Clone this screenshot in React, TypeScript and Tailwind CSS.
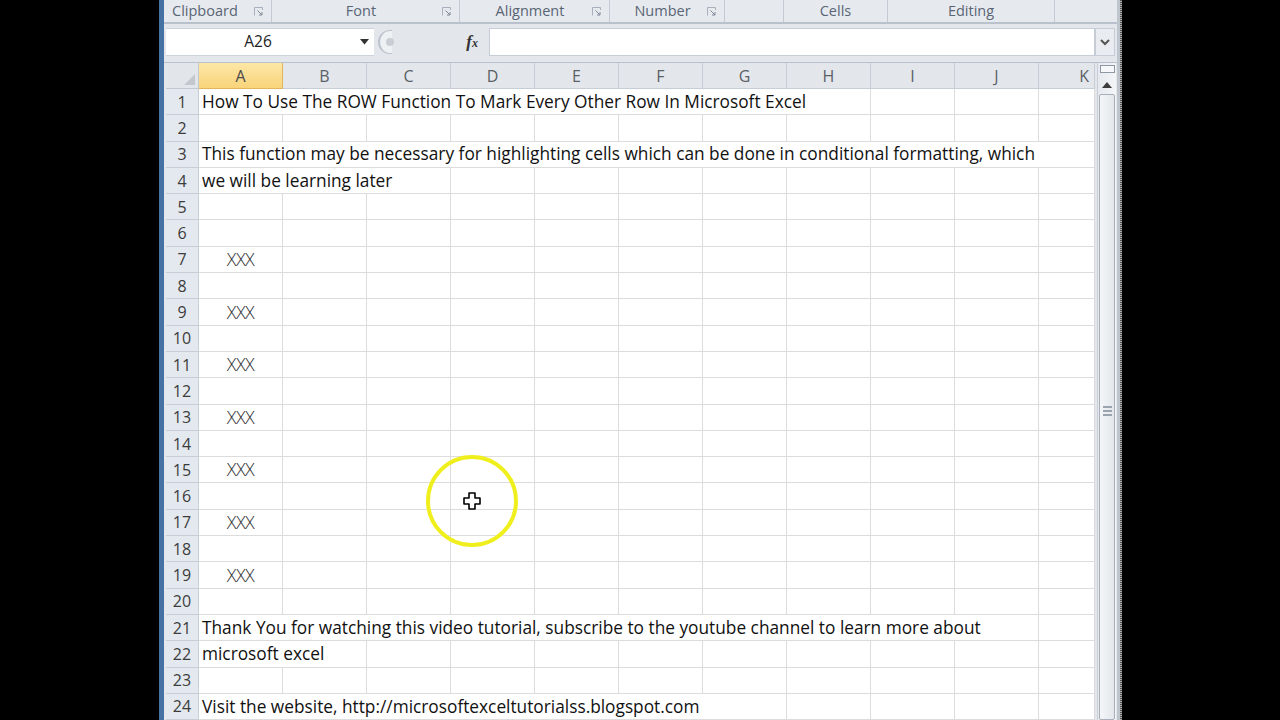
// Excel 2010 sheet — ROW function tutorial frame
import React from 'react';

const COLS = ['A', 'B', 'C', 'D', 'E', 'F', 'G', 'H', 'I', 'J', 'K'];
const COL_W = 84;
const LAST_W = 56;

// row number -> [text, columns covered, centred]
const ROWS: Record<number, [string, number, boolean?]> = {
  1: ['How To Use The ROW Function To Mark Every Other Row In Microsoft Excel', 8],
  3: ['This function may be necessary for highlighting cells which can be done in conditional formatting, which', 11],
  4: ['we will be learning later', 3],
  7: ['XXX', 1, true],
  9: ['XXX', 1, true],
  11: ['XXX', 1, true],
  13: ['XXX', 1, true],
  15: ['XXX', 1, true],
  17: ['XXX', 1, true],
  19: ['XXX', 1, true],
  21: ['Thank You for watching this video tutorial, subscribe to the youtube channel to learn more about', 10],
  22: ['microsoft excel', 2],
  24: ['Visit the website, http://microsoftexceltutorialss.blogspot.com', 7],
};

const GROUPS = [
  { label: 'Clipboard', w: 108, launcher: true, align: 'start' },
  { label: 'Font', w: 188, launcher: true },
  { label: 'Alignment', w: 150, launcher: true },
  { label: 'Number', w: 115, launcher: true },
  { label: '', w: 59 },
  { label: 'Cells', w: 104 },
  { label: 'Editing', w: 167 },
];

function Launcher() {
  return (
    <svg width="9" height="9" viewBox="0 0 9 9" className="shrink-0">
      <path d="M0.5 8.5V0.5H8.5V3" fill="none" stroke="#a7b0bc" />
      <path d="M3.5 3.5L8 8M8 5V8H5" fill="none" stroke="#7e8896" />
    </svg>
  );
}

function colWidth(i: number) {
  return i === COLS.length - 1 ? LAST_W : COL_W;
}

function Row({ n }: { n: number }) {
  const entry = ROWS[n];
  const span = entry ? entry[1] : 0;
  const spanW = COLS.slice(0, span).reduce((s, _, i) => s + colWidth(i), 0);
  return (
    <div className="flex h-[26.3px]">
      <div className="w-[33px] shrink-0 flex items-center justify-center bg-[#e4e9ef] border-b border-r border-[#c6ced8] text-[#3c3c3c] text-[16px]">
        {n}
      </div>
      {entry && (
        <div
          className={`shrink-0 h-full flex items-center bg-white border-b border-r border-[#dcdcdc] whitespace-nowrap text-[17.3px] text-[#111] ${entry[2] ? 'justify-center' : 'pl-[3px]'}`}
          style={{ width: spanW }}
        >
          {entry[2] ? <span className="text-[18px] tracking-[-0.5px] text-[#333] font-light">XXX</span> : entry[0]}
        </div>
      )}
      {COLS.slice(span).map((c, i) => (
        <div
          key={c}
          className="shrink-0 h-full bg-white border-b border-r border-[#dcdcdc]"
          style={{ width: colWidth(i + span) }}
        />
      ))}
    </div>
  );
}

export default function App() {
  const rows = Array.from({ length: 24 }, (_, i) => i + 1);
  return (
    <div className="w-[1280px] h-[720px] bg-black flex overflow-hidden font-['Open_Sans',sans-serif]">
      <div className="w-[159px] shrink-0" />
      <div className="w-[5px] shrink-0 bg-[#4671a3]" />

      <div className="w-[953px] shrink-0 flex flex-col bg-[#e3e7ec]">
        {/* ribbon group captions */}
        <div className="h-[24px] flex bg-[#e6eaef] border-b-2 border-[#b9c2cc]">
          {GROUPS.map((g, i) => (
            <div
              key={i}
              className="h-full flex items-center border-r border-[#c3cad3] px-[8px] text-[14.5px] text-[#5a6574]"
              style={{ width: g.w }}
            >
              <span className={`flex-1 ${g.align === 'start' ? 'text-left' : 'text-center'}`}>{g.label}</span>
              {g.launcher && <Launcher />}
            </div>
          ))}
          <div className="flex-1" />
        </div>

        {/* formula bar */}
        <div className="flex h-[28px] mt-[4px] items-stretch">
          <div className="w-[208px] ml-[2px] bg-white flex items-center relative border-y border-[#cdd3da]">
            <span className="flex-1 text-center text-[15.5px] text-[#222] pr-[10px]">A26</span>
            <svg width="9" height="6" viewBox="0 0 9 6" className="mr-[5px]">
              <path d="M0 0H9L4.5 5.5Z" fill="#333" />
            </svg>
          </div>
          <div className="w-[115px] flex items-center relative">
            <div className="ml-[4px] w-[14px] h-[24px] rounded-l-full border-l-2 border-y border-[#bcc3cc] bg-[#eef1f4] flex items-center justify-end">
              <div className="w-[8px] h-[8px] rounded-full bg-[#c9ced5] mr-[-2px]" />
            </div>
            <span className="ml-auto mr-[11px] font-['Liberation_Serif',serif] italic font-bold text-[17px] text-[#333]">
              f<span className="text-[12px]">x</span>
            </span>
          </div>
          <div className="w-[606px] bg-white border border-[#c6cdd6]" />
          <div className="w-[20px] flex items-center justify-center bg-[#e9ecf0] border border-[#c6cdd6]">
            <svg width="10" height="7" viewBox="0 0 10 7">
              <path d="M1 1L5 5L9 1" fill="none" stroke="#555" strokeWidth="2" />
            </svg>
          </div>
        </div>

        <div className="flex-1 flex mt-[6px] min-h-0 border-t border-[#b9c2cc]">
          {/* grid */}
          <div className="w-[931px] ml-[2px] flex flex-col overflow-hidden">
            <div className="flex h-[26px] shrink-0">
              <div className="w-[33px] bg-[#e2e6eb] border-b border-r border-[#c2c9d2] flex items-end justify-end p-[3px]">
                <svg width="11" height="11" viewBox="0 0 11 11">
                  <path d="M11 0V11H0Z" fill="#c3c8ce" />
                </svg>
              </div>
              {COLS.map((c, i) => (
                <div
                  key={c}
                  className={`h-full flex items-center border-b border-r text-[16px] ${i === COLS.length - 1 ? 'justify-end pr-[5px]' : 'justify-center'} ${c === 'A' ? 'bg-gradient-to-b from-[#fde7a6] to-[#f9d47a] border-[#e1b65b] text-[#4a4a4a]' : 'bg-[#e3e7ec] border-[#c6cdd6] text-[#5b5f66]'}`}
                  style={{ width: colWidth(i) }}
                >
                  {c}
                </div>
              ))}
            </div>
            {rows.map(n => (
              <Row key={n} n={n} />
            ))}
          </div>

          {/* vertical scrollbar */}
          <div className="w-[19px] flex flex-col items-center bg-gradient-to-r from-[#e6e9ee] to-[#f3f5f7] border-l border-[#c9cfd6]">
            <div className="mt-[2px] w-[15px] h-[8px] border border-[#8e98a4] bg-[#f7f8fa]" />
            <svg width="10" height="6" viewBox="0 0 10 6" className="mt-[9px]">
              <path d="M0 6L5 0L10 6Z" fill="#3d3d3d" />
            </svg>
            <div className="mt-[6px] w-[16px] flex-1 rounded-[2px] border border-[#a7afba] bg-gradient-to-r from-[#f4f6f8] to-[#e3e7ec] flex flex-col items-center pt-[311px]">
              <div className="w-[9px] h-[10px] flex flex-col justify-between">
                <div className="h-[2px] bg-[#9aa3ae]" />
                <div className="h-[2px] bg-[#9aa3ae]" />
                <div className="h-[2px] bg-[#9aa3ae]" />
              </div>
            </div>
          </div>
        </div>
      </div>

      <div className="w-[3px] shrink-0 bg-[#bfc5cc]" />
      <div className="w-[2px] shrink-0 bg-[repeating-linear-gradient(to_bottom,#555_0px,#555_1px,#aaa_1px,#aaa_2px)]" />

      {/* screen-recorder click highlight */}
      <div className="absolute left-[426px] top-[455px] w-[92px] h-[92px] rounded-full border-[4px] border-[#f0ef1e] pointer-events-none" />
      <svg className="absolute left-[463px] top-[492px]" width="18" height="18" viewBox="0 0 18 18">
        <path d="M6 1H12V6H17V12H12V17H6V12H1V6H6Z" fill="#fff" stroke="#000" strokeWidth="1.6" strokeLinejoin="round" />
      </svg>
    </div>
  );
}
